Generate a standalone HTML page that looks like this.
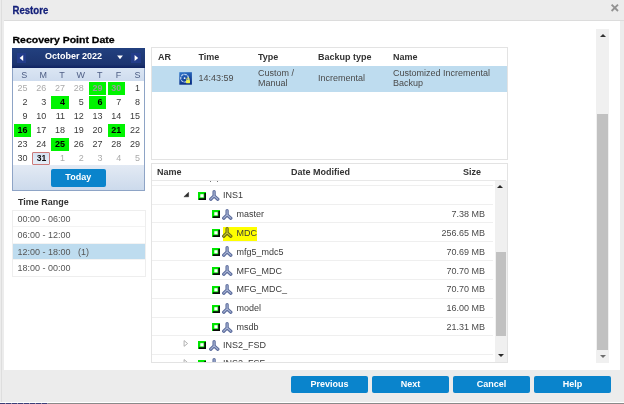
<!DOCTYPE html>
<html><head><meta charset="utf-8">
<style>
*{box-sizing:border-box;margin:0;padding:0}
html,body{width:624px;height:404px;overflow:hidden;background:#ececec;font-family:"Liberation Sans",sans-serif;position:relative}
.a{position:absolute}
.t{position:absolute;white-space:nowrap;line-height:1}
.s{display:inline-block;transform:scaleY(1.1);transform-origin:0 calc(50% + 0.3465em)}
#white{left:4px;top:21px;width:616px;height:349px;background:#fff}
#titleline{left:4px;top:20px;width:620px;height:1px;background:#dcdcdc}
#leftline{left:1px;top:0;width:1px;height:402px;background:#dedede}
#title{left:12.5px;top:6px;font-weight:bold;font-size:9.6px;color:#14207a;-webkit-text-stroke:0.25px #14207a}
.close{left:610px;top:2px;font-size:12px;color:#8a8a8a;font-weight:bold}
/* main scrollbar */
#msb{left:596px;top:29px;width:13px;height:333.6px;background:#f0f0f0}
#mthumb{left:597.3px;top:114px;width:10.7px;height:236.3px;background:#c1c1c1}
.arrowup{width:0;height:0;border-left:4px solid transparent;border-right:4px solid transparent;border-bottom:4px solid #333}
.arrowdn{width:0;height:0;border-left:4px solid transparent;border-right:4px solid transparent;border-top:4px solid #555}
#rpd .s{transform:scaleY(0.9)}
#rpd{left:12.5px;top:34.4px;font-weight:bold;font-size:10.5px;color:#000;-webkit-text-stroke:0.3px #000}
/* calendar */
#cal{left:12px;top:48px;width:133px;height:143px;border:1px solid #8ea4c6;background:#fff}
#calhead{left:12px;top:48px;width:133px;height:20.3px;background:linear-gradient(#22407f,#1c346f 82%,#0e2160)}
.navbtn{width:9.5px;height:9.8px;background:#233c8a}
#month{left:45px;top:52.1px;font-weight:bold;font-size:9px;color:#fff}
#dnames{left:13px;top:68px;width:131px;height:12.5px;background:linear-gradient(#dbe6f4,#cfdcee)}
.dn{font-size:9px;color:#4d5d84;top:70.8px}
.d{font-size:9px;color:#3a3a3a;text-align:right;width:17px}
.g{background:#00f400;color:#000;font-weight:bold}
.o{color:#aaa}
.g.o{color:#9a9a9a}
.td31{background:linear-gradient(#d6e2f2,#e6eef8);border:1px solid #cc7a7a;border-radius:1px;color:#111;font-weight:bold;font-size:8.6px!important;line-height:10.4px!important;padding-right:2.5px!important}
#calfoot{left:13px;top:165px;width:131px;height:24.5px;background:linear-gradient(#e3eaf4,#ccdaec)}
#today{left:50.5px;top:169px;width:55.5px;height:17.5px;background:#0a84cc;border-radius:2px;color:#fff;font-weight:bold;font-size:9px;text-align:center;line-height:17.5px}
#tr{left:18px;top:198px;font-weight:bold;font-size:9px;color:#333}
#list{left:12px;top:210px;width:134px;height:67px;border:1px solid #eeeeee}
.li{left:13px;width:132px;height:16.5px;font-size:9px;color:#555;padding-left:4.5px;line-height:16.5px;border-bottom:1px solid #f3f3f3}
/* top table */
#tbl{left:151px;top:47px;width:357px;height:113px;border:1px solid #e3e3e3}
.th{font-weight:bold;font-size:9px;color:#333;top:52.5px}
#selrow{left:152px;top:65.5px;width:355px;height:26px;background:#bedcef}
.td{font-size:9px;color:#4a4a4a}
/* tree */
#tree{left:151px;top:163px;width:356.5px;height:199.5px;border:1px solid #e3e3e3}
#treehdrline{left:152px;top:179.5px;width:354px;height:1px;background:#e8e8e8}
.sep{left:152px;width:341px;height:1px;background:#efefef}
#tsb{left:495px;top:181px;width:12px;height:180.5px;background:#f0f0f0}
#tthumb{left:495.5px;top:252px;width:10.5px;height:84px;background:#c1c1c1}
.tn{font-size:9px;color:#3a3a3a}
.sz{font-size:9px;color:#4a4a4a;text-align:right;width:80px;left:405px}
.cb{width:8px;height:8px;background:#00e000}
.cb::before{content:"";position:absolute;left:2px;top:2px;width:6px;height:6px;background:#000}
.cb::after{content:"";position:absolute;left:2px;top:2px;width:3.3px;height:3.3px;background:#fff}
/* buttons */
.btn{top:376px;width:77px;height:17.3px;background:#0a84cc;border-radius:2px;color:#fff;font-weight:bold;font-size:9px;text-align:center;line-height:16.2px}
#botline{left:0;top:402px;width:624px;height:1px;background:#fff}
#botline2{left:0;top:403px;width:624px;height:1px;background:#8a8a8a}
#botnavy{left:0;top:403px;width:48px;height:1px;background:repeating-linear-gradient(90deg,#3a3f78 0 5px,#9a9ab0 5px 6px)}
</style></head><body>
<div id="root" style="position:absolute;left:0;top:0;width:624px;height:404px;will-change:transform">
<div class="a" id="leftline"></div>
<div class="a" id="titleline"></div>
<div class="a" id="white"></div>
<div class="t" id="title"><span class="s">Restore</span></div>
<svg class="a" style="left:610px;top:3px" width="10" height="10" viewBox="0 0 10 10"><path d="M1.6 1.6L8 8M8 1.6L1.6 8" stroke="#929292" stroke-width="1.85"/></svg>

<div class="a" id="msb"></div>
<div class="a" id="mthumb"></div>
<div class="a arrowup" style="left:599.5px;top:33.5px;border-width:0 3px 3px"></div>
<div class="a arrowdn" style="left:599.5px;top:354.5px;border-width:3px 3px 0;border-top-color:#6e6e6e"></div>

<div class="t" id="rpd"><span class="s">Recovery Point Date</span></div>

<!-- calendar -->
<div class="a" id="cal"></div>
<div class="a" id="calhead"></div>
<div class="a navbtn" style="left:16.8px;top:53.3px"></div>
<div class="t" id="month"><span class="s">October 2022</span></div>

<div class="a navbtn" style="left:131px;top:53.3px"></div>
<svg class="a" style="left:0;top:0" width="160" height="80" viewBox="0 0 160 80"><path d="M19.6 58L23.2 55V61Z M117.1 55.6H122.9L120 59.2Z M138.2 58L134.6 55V61Z" fill="#fff"/></svg>

<div class="a" id="dnames"></div>
<div class="t dn" style="left:15.60px;width:17.40px;text-align:center"><span class="s">S</span></div>
<div class="t dn" style="left:34.45px;width:17.40px;text-align:center"><span class="s">M</span></div>
<div class="t dn" style="left:53.30px;width:17.40px;text-align:center"><span class="s">T</span></div>
<div class="t dn" style="left:72.15px;width:17.40px;text-align:center"><span class="s">W</span></div>
<div class="t dn" style="left:91.00px;width:17.40px;text-align:center"><span class="s">T</span></div>
<div class="t dn" style="left:109.85px;width:17.40px;text-align:center"><span class="s">F</span></div>
<div class="t dn" style="left:128.70px;width:17.40px;text-align:center"><span class="s">S</span></div>
<div class="t d o" style="left:13.60px;top:82.20px;width:17.40px;height:12.40px;line-height:12.40px;padding-right:3.50px"><span class="s">25</span></div>
<div class="t d o" style="left:32.45px;top:82.20px;width:17.40px;height:12.40px;line-height:12.40px;padding-right:3.60px"><span class="s">26</span></div>
<div class="t d o" style="left:51.30px;top:82.20px;width:17.40px;height:12.40px;line-height:12.40px;padding-right:3.70px"><span class="s">27</span></div>
<div class="t d o" style="left:70.15px;top:82.20px;width:17.40px;height:12.40px;line-height:12.40px;padding-right:3.80px"><span class="s">28</span></div>
<div class="t d g o" style="left:89.00px;top:82.20px;width:17.40px;height:12.40px;line-height:12.40px;padding-right:3.90px"><span class="s">29</span></div>
<div class="t d g o" style="left:107.85px;top:82.20px;width:17.40px;height:12.40px;line-height:12.40px;padding-right:4.00px"><span class="s">30</span></div>
<div class="t d" style="left:126.70px;top:82.20px;width:17.40px;height:12.40px;line-height:12.40px;padding-right:4.10px"><span class="s">1</span></div>
<div class="t d" style="left:13.60px;top:96.20px;width:17.40px;height:12.40px;line-height:12.40px;padding-right:3.50px"><span class="s">2</span></div>
<div class="t d" style="left:32.45px;top:96.20px;width:17.40px;height:12.40px;line-height:12.40px;padding-right:3.60px"><span class="s">3</span></div>
<div class="t d g" style="left:51.30px;top:96.20px;width:17.40px;height:12.40px;line-height:12.40px;padding-right:3.70px"><span class="s">4</span></div>
<div class="t d" style="left:70.15px;top:96.20px;width:17.40px;height:12.40px;line-height:12.40px;padding-right:3.80px"><span class="s">5</span></div>
<div class="t d g" style="left:89.00px;top:96.20px;width:17.40px;height:12.40px;line-height:12.40px;padding-right:3.90px"><span class="s">6</span></div>
<div class="t d" style="left:107.85px;top:96.20px;width:17.40px;height:12.40px;line-height:12.40px;padding-right:4.00px"><span class="s">7</span></div>
<div class="t d" style="left:126.70px;top:96.20px;width:17.40px;height:12.40px;line-height:12.40px;padding-right:4.10px"><span class="s">8</span></div>
<div class="t d" style="left:13.60px;top:110.20px;width:17.40px;height:12.40px;line-height:12.40px;padding-right:3.50px"><span class="s">9</span></div>
<div class="t d" style="left:32.45px;top:110.20px;width:17.40px;height:12.40px;line-height:12.40px;padding-right:3.60px"><span class="s">10</span></div>
<div class="t d" style="left:51.30px;top:110.20px;width:17.40px;height:12.40px;line-height:12.40px;padding-right:3.70px"><span class="s">11</span></div>
<div class="t d" style="left:70.15px;top:110.20px;width:17.40px;height:12.40px;line-height:12.40px;padding-right:3.80px"><span class="s">12</span></div>
<div class="t d" style="left:89.00px;top:110.20px;width:17.40px;height:12.40px;line-height:12.40px;padding-right:3.90px"><span class="s">13</span></div>
<div class="t d" style="left:107.85px;top:110.20px;width:17.40px;height:12.40px;line-height:12.40px;padding-right:4.00px"><span class="s">14</span></div>
<div class="t d" style="left:126.70px;top:110.20px;width:17.40px;height:12.40px;line-height:12.40px;padding-right:4.10px"><span class="s">15</span></div>
<div class="t d g" style="left:13.60px;top:124.20px;width:17.40px;height:12.40px;line-height:12.40px;padding-right:3.50px"><span class="s">16</span></div>
<div class="t d" style="left:32.45px;top:124.20px;width:17.40px;height:12.40px;line-height:12.40px;padding-right:3.60px"><span class="s">17</span></div>
<div class="t d" style="left:51.30px;top:124.20px;width:17.40px;height:12.40px;line-height:12.40px;padding-right:3.70px"><span class="s">18</span></div>
<div class="t d" style="left:70.15px;top:124.20px;width:17.40px;height:12.40px;line-height:12.40px;padding-right:3.80px"><span class="s">19</span></div>
<div class="t d" style="left:89.00px;top:124.20px;width:17.40px;height:12.40px;line-height:12.40px;padding-right:3.90px"><span class="s">20</span></div>
<div class="t d g" style="left:107.85px;top:124.20px;width:17.40px;height:12.40px;line-height:12.40px;padding-right:4.00px"><span class="s">21</span></div>
<div class="t d" style="left:126.70px;top:124.20px;width:17.40px;height:12.40px;line-height:12.40px;padding-right:4.10px"><span class="s">22</span></div>
<div class="t d" style="left:13.60px;top:138.20px;width:17.40px;height:12.40px;line-height:12.40px;padding-right:3.50px"><span class="s">23</span></div>
<div class="t d" style="left:32.45px;top:138.20px;width:17.40px;height:12.40px;line-height:12.40px;padding-right:3.60px"><span class="s">24</span></div>
<div class="t d g" style="left:51.30px;top:138.20px;width:17.40px;height:12.40px;line-height:12.40px;padding-right:3.70px"><span class="s">25</span></div>
<div class="t d" style="left:70.15px;top:138.20px;width:17.40px;height:12.40px;line-height:12.40px;padding-right:3.80px"><span class="s">26</span></div>
<div class="t d" style="left:89.00px;top:138.20px;width:17.40px;height:12.40px;line-height:12.40px;padding-right:3.90px"><span class="s">27</span></div>
<div class="t d" style="left:107.85px;top:138.20px;width:17.40px;height:12.40px;line-height:12.40px;padding-right:4.00px"><span class="s">28</span></div>
<div class="t d" style="left:126.70px;top:138.20px;width:17.40px;height:12.40px;line-height:12.40px;padding-right:4.10px"><span class="s">29</span></div>
<div class="t d" style="left:13.60px;top:152.20px;width:17.40px;height:12.40px;line-height:12.40px;padding-right:3.50px"><span class="s">30</span></div>
<div class="t d o td31" style="left:32.45px;top:152.20px;width:17.40px;height:12.40px;line-height:12.40px;padding-right:3.60px"><span class="s">31</span></div>
<div class="t d o" style="left:51.30px;top:152.20px;width:17.40px;height:12.40px;line-height:12.40px;padding-right:3.70px"><span class="s">1</span></div>
<div class="t d o" style="left:70.15px;top:152.20px;width:17.40px;height:12.40px;line-height:12.40px;padding-right:3.80px"><span class="s">2</span></div>
<div class="t d o" style="left:89.00px;top:152.20px;width:17.40px;height:12.40px;line-height:12.40px;padding-right:3.90px"><span class="s">3</span></div>
<div class="t d o" style="left:107.85px;top:152.20px;width:17.40px;height:12.40px;line-height:12.40px;padding-right:4.00px"><span class="s">4</span></div>
<div class="t d o" style="left:126.70px;top:152.20px;width:17.40px;height:12.40px;line-height:12.40px;padding-right:4.10px"><span class="s">5</span></div>
<div class="a" id="calfoot"></div>
<div class="t" id="today"><span class="s">Today</span></div>

<div class="t" id="tr"><span class="s">Time Range</span></div>
<div class="a" id="list"></div>
<div class="t li" style="top:210.5px"><span class="s">00:00 - 06:00</span></div>
<div class="t li" style="top:227px"><span class="s">06:00 - 12:00</span></div>
<div class="t li" style="top:243.5px;background:#bedcef"><span class="s">12:00 - 18:00 &nbsp;&nbsp;(1)</span></div>
<div class="t li" style="top:260px;border-bottom:none"><span class="s">18:00 - 00:00</span></div>

<!-- top table -->
<div class="a" id="tbl"></div>
<div class="a" id="selrow"></div>
<div class="t th" style="left:158px"><span class="s">AR</span></div>
<div class="t th" style="left:198.5px"><span class="s">Time</span></div>
<div class="t th" style="left:258px"><span class="s">Type</span></div>
<div class="t th" style="left:318px"><span class="s">Backup type</span></div>
<div class="t th" style="left:393px"><span class="s">Name</span></div>
<svg class="a" style="left:179px;top:72px" width="13" height="13" viewBox="0 0 13 13">
<defs><linearGradient id="ig" x1="0" y1="0" x2="0.3" y2="1"><stop offset="0" stop-color="#2f78cc"/><stop offset="1" stop-color="#0a2f86"/></linearGradient></defs>
<rect x="0.3" y="0.2" width="12.6" height="12.5" fill="url(#ig)"/>
<circle cx="5.6" cy="6.2" r="3.9" fill="none" stroke="#b8d0f0" stroke-width="1.2" stroke-dasharray="2.8 0.7"/>
<circle cx="5.6" cy="6.2" r="0.9" fill="#e8f0ff"/>
<rect x="7" y="8" width="4" height="3.2" rx="0.4" fill="#ecf050"/>
<path d="M7.8 8.2V7.1a1.2 1.2 0 0 1 2.4 0V8.2" fill="none" stroke="#ecf050" stroke-width="0.9"/>
</svg>
<div class="t td" style="left:198.5px;top:73.5px"><span class="s">14:43:59</span></div>
<div class="t td" style="left:258px;top:68.5px"><span class="s">Custom /</span></div>
<div class="t td" style="left:258px;top:79px"><span class="s">Manual</span></div>
<div class="t td" style="left:318px;top:74px"><span class="s">Incremental</span></div>
<div class="t td" style="left:393px;top:68.5px"><span class="s">Customized Incremental</span></div>
<div class="t td" style="left:393px;top:79px"><span class="s">Backup</span></div>

<!-- tree -->
<div class="a" id="tree"></div>
<div class="t th" style="left:157px;top:167.5px"><span class="s">Name</span></div>
<div class="t th" style="left:291px;top:167.5px"><span class="s">Date Modified</span></div>
<div class="t th" style="left:463px;top:167.5px"><span class="s">Size</span></div>
<div class="a" id="treehdrline"></div>
<div class="a" style="left:0;top:180.5px;width:495px;height:181.5px;overflow:hidden"><div class="a" style="left:0;top:-180.5px;width:624px;height:404px"><div class="a" style="left:210px;top:180.5px;width:1.2px;height:1.2px;background:#777"></div><div class="a" style="left:216.8px;top:180.5px;width:1.2px;height:1.2px;background:#777"></div>
<div class="a sep" style="top:185.00px"></div>
<div class="a sep" style="top:204.00px"></div>
<div class="a sep" style="top:222.00px"></div>
<div class="a sep" style="top:241.00px"></div>
<div class="a sep" style="top:260.00px"></div>
<div class="a sep" style="top:279.00px"></div>
<div class="a sep" style="top:298.00px"></div>
<div class="a sep" style="top:317.00px"></div>
<div class="a sep" style="top:335.00px"></div>
<div class="a sep" style="top:354.00px"></div>
<svg class="a" style="left:183px;top:191.50px" width="8" height="8"><path d="M0.9 4.8H5.6V0.3Z" fill="#2a2a2a" stroke="#2a2a2a" stroke-width="0.5" stroke-linejoin="round"/></svg>
<svg class="a" style="left:198.20px;top:191.50px" width="8" height="8" viewBox="0 0 8 8"><rect width="8" height="8" fill="#00e600"/><path d="M8 0.9V8H0.9V6.3H6.3V0.9Z" fill="#0a0a0a"/><rect x="2.3" y="2.2" width="3.3" height="3.2" fill="#fff"/></svg>
<svg class="a" style="left:208.50px;top:188.70px" width="12" height="13" viewBox="0 0 12 13"><path d="M5.1 2.6V6.9L1.7 10.2M5.1 6.9L8.8 10.2" fill="none" stroke="#5d6d9d" stroke-width="3.3" stroke-linecap="round" stroke-linejoin="round"/><path d="M5.1 2.6V6.9L1.7 10.2M5.1 6.9L8.8 10.2" fill="none" stroke="#aab6d6" stroke-width="1.1" stroke-linecap="round" stroke-linejoin="round"/></svg>
<div class="t tn" style="left:222.90px;top:191.20px"><span class="s">INS1</span></div>
<svg class="a" style="left:211.90px;top:210.35px" width="8" height="8" viewBox="0 0 8 8"><rect width="8" height="8" fill="#00e600"/><path d="M8 0.9V8H0.9V6.3H6.3V0.9Z" fill="#0a0a0a"/><rect x="2.3" y="2.2" width="3.3" height="3.2" fill="#fff"/></svg>
<svg class="a" style="left:222.20px;top:207.55px" width="12" height="13" viewBox="0 0 12 13"><path d="M5.1 2.6V6.9L1.7 10.2M5.1 6.9L8.8 10.2" fill="none" stroke="#5d6d9d" stroke-width="3.3" stroke-linecap="round" stroke-linejoin="round"/><path d="M5.1 2.6V6.9L1.7 10.2M5.1 6.9L8.8 10.2" fill="none" stroke="#aab6d6" stroke-width="1.1" stroke-linecap="round" stroke-linejoin="round"/></svg>
<div class="t tn" style="left:236.60px;top:210.05px"><span class="s">master</span></div>
<div class="t sz" style="top:210.05px"><span class="s">7.38 MB</span></div>
<div class="a" style="left:222.70px;top:227.20px;width:34.2px;height:13.4px;background:#ffff00"></div>
<svg class="a" style="left:211.90px;top:229.20px" width="8" height="8" viewBox="0 0 8 8"><rect width="8" height="8" fill="#00e600"/><path d="M8 0.9V8H0.9V6.3H6.3V0.9Z" fill="#0a0a0a"/><rect x="2.3" y="2.2" width="3.3" height="3.2" fill="#fff"/></svg>
<svg class="a" style="left:222.20px;top:226.40px" width="12" height="13" viewBox="0 0 12 13"><path d="M5.1 2.6V6.9L1.7 10.2M5.1 6.9L8.8 10.2" fill="none" stroke="#6e6e12" stroke-width="3.3" stroke-linecap="round" stroke-linejoin="round"/><path d="M5.1 2.6V6.9L1.7 10.2M5.1 6.9L8.8 10.2" fill="none" stroke="#c4c438" stroke-width="1.1" stroke-linecap="round" stroke-linejoin="round"/></svg>
<div class="t tn" style="left:236.60px;top:228.90px"><span class="s">MDC</span></div>
<div class="t sz" style="top:228.90px"><span class="s">256.65 MB</span></div>
<svg class="a" style="left:211.90px;top:248.05px" width="8" height="8" viewBox="0 0 8 8"><rect width="8" height="8" fill="#00e600"/><path d="M8 0.9V8H0.9V6.3H6.3V0.9Z" fill="#0a0a0a"/><rect x="2.3" y="2.2" width="3.3" height="3.2" fill="#fff"/></svg>
<svg class="a" style="left:222.20px;top:245.25px" width="12" height="13" viewBox="0 0 12 13"><path d="M5.1 2.6V6.9L1.7 10.2M5.1 6.9L8.8 10.2" fill="none" stroke="#5d6d9d" stroke-width="3.3" stroke-linecap="round" stroke-linejoin="round"/><path d="M5.1 2.6V6.9L1.7 10.2M5.1 6.9L8.8 10.2" fill="none" stroke="#aab6d6" stroke-width="1.1" stroke-linecap="round" stroke-linejoin="round"/></svg>
<div class="t tn" style="left:236.60px;top:247.75px"><span class="s">mfg5_mdc5</span></div>
<div class="t sz" style="top:247.75px"><span class="s">70.69 MB</span></div>
<svg class="a" style="left:211.90px;top:266.90px" width="8" height="8" viewBox="0 0 8 8"><rect width="8" height="8" fill="#00e600"/><path d="M8 0.9V8H0.9V6.3H6.3V0.9Z" fill="#0a0a0a"/><rect x="2.3" y="2.2" width="3.3" height="3.2" fill="#fff"/></svg>
<svg class="a" style="left:222.20px;top:264.10px" width="12" height="13" viewBox="0 0 12 13"><path d="M5.1 2.6V6.9L1.7 10.2M5.1 6.9L8.8 10.2" fill="none" stroke="#5d6d9d" stroke-width="3.3" stroke-linecap="round" stroke-linejoin="round"/><path d="M5.1 2.6V6.9L1.7 10.2M5.1 6.9L8.8 10.2" fill="none" stroke="#aab6d6" stroke-width="1.1" stroke-linecap="round" stroke-linejoin="round"/></svg>
<div class="t tn" style="left:236.60px;top:266.60px"><span class="s">MFG_MDC</span></div>
<div class="t sz" style="top:266.60px"><span class="s">70.70 MB</span></div>
<svg class="a" style="left:211.90px;top:285.75px" width="8" height="8" viewBox="0 0 8 8"><rect width="8" height="8" fill="#00e600"/><path d="M8 0.9V8H0.9V6.3H6.3V0.9Z" fill="#0a0a0a"/><rect x="2.3" y="2.2" width="3.3" height="3.2" fill="#fff"/></svg>
<svg class="a" style="left:222.20px;top:282.95px" width="12" height="13" viewBox="0 0 12 13"><path d="M5.1 2.6V6.9L1.7 10.2M5.1 6.9L8.8 10.2" fill="none" stroke="#5d6d9d" stroke-width="3.3" stroke-linecap="round" stroke-linejoin="round"/><path d="M5.1 2.6V6.9L1.7 10.2M5.1 6.9L8.8 10.2" fill="none" stroke="#aab6d6" stroke-width="1.1" stroke-linecap="round" stroke-linejoin="round"/></svg>
<div class="t tn" style="left:236.60px;top:285.45px"><span class="s">MFG_MDC_</span></div>
<div class="t sz" style="top:285.45px"><span class="s">70.70 MB</span></div>
<svg class="a" style="left:211.90px;top:304.60px" width="8" height="8" viewBox="0 0 8 8"><rect width="8" height="8" fill="#00e600"/><path d="M8 0.9V8H0.9V6.3H6.3V0.9Z" fill="#0a0a0a"/><rect x="2.3" y="2.2" width="3.3" height="3.2" fill="#fff"/></svg>
<svg class="a" style="left:222.20px;top:301.80px" width="12" height="13" viewBox="0 0 12 13"><path d="M5.1 2.6V6.9L1.7 10.2M5.1 6.9L8.8 10.2" fill="none" stroke="#5d6d9d" stroke-width="3.3" stroke-linecap="round" stroke-linejoin="round"/><path d="M5.1 2.6V6.9L1.7 10.2M5.1 6.9L8.8 10.2" fill="none" stroke="#aab6d6" stroke-width="1.1" stroke-linecap="round" stroke-linejoin="round"/></svg>
<div class="t tn" style="left:236.60px;top:304.30px"><span class="s">model</span></div>
<div class="t sz" style="top:304.30px"><span class="s">16.00 MB</span></div>
<svg class="a" style="left:211.90px;top:323.45px" width="8" height="8" viewBox="0 0 8 8"><rect width="8" height="8" fill="#00e600"/><path d="M8 0.9V8H0.9V6.3H6.3V0.9Z" fill="#0a0a0a"/><rect x="2.3" y="2.2" width="3.3" height="3.2" fill="#fff"/></svg>
<svg class="a" style="left:222.20px;top:320.65px" width="12" height="13" viewBox="0 0 12 13"><path d="M5.1 2.6V6.9L1.7 10.2M5.1 6.9L8.8 10.2" fill="none" stroke="#5d6d9d" stroke-width="3.3" stroke-linecap="round" stroke-linejoin="round"/><path d="M5.1 2.6V6.9L1.7 10.2M5.1 6.9L8.8 10.2" fill="none" stroke="#aab6d6" stroke-width="1.1" stroke-linecap="round" stroke-linejoin="round"/></svg>
<div class="t tn" style="left:236.60px;top:323.15px"><span class="s">msdb</span></div>
<div class="t sz" style="top:323.15px"><span class="s">21.31 MB</span></div>
<svg class="a" style="left:183px;top:340.30px" width="8" height="10"><path d="M1.1 0.6L4.6 3.5L1.1 6.3Z" fill="#fff" stroke="#a8a8a8" stroke-width="0.9"/></svg>
<svg class="a" style="left:198.20px;top:341.30px" width="8" height="8" viewBox="0 0 8 8"><rect width="8" height="8" fill="#00e600"/><path d="M8 0.9V8H0.9V6.3H6.3V0.9Z" fill="#0a0a0a"/><rect x="2.3" y="2.2" width="3.3" height="3.2" fill="#fff"/></svg>
<svg class="a" style="left:208.50px;top:338.50px" width="12" height="13" viewBox="0 0 12 13"><path d="M5.1 2.6V6.9L1.7 10.2M5.1 6.9L8.8 10.2" fill="none" stroke="#5d6d9d" stroke-width="3.3" stroke-linecap="round" stroke-linejoin="round"/><path d="M5.1 2.6V6.9L1.7 10.2M5.1 6.9L8.8 10.2" fill="none" stroke="#aab6d6" stroke-width="1.1" stroke-linecap="round" stroke-linejoin="round"/></svg>
<div class="t tn" style="left:222.90px;top:341.00px"><span class="s">INS2_FSD</span></div>
<svg class="a" style="left:183px;top:358.60px" width="8" height="10"><path d="M1.1 0.6L4.6 3.5L1.1 6.3Z" fill="#fff" stroke="#a8a8a8" stroke-width="0.9"/></svg>
<svg class="a" style="left:198.20px;top:359.60px" width="8" height="8" viewBox="0 0 8 8"><rect width="8" height="8" fill="#00e600"/><path d="M8 0.9V8H0.9V6.3H6.3V0.9Z" fill="#0a0a0a"/><rect x="2.3" y="2.2" width="3.3" height="3.2" fill="#fff"/></svg>
<svg class="a" style="left:208.50px;top:356.80px" width="12" height="13" viewBox="0 0 12 13"><path d="M5.1 2.6V6.9L1.7 10.2M5.1 6.9L8.8 10.2" fill="none" stroke="#5d6d9d" stroke-width="3.3" stroke-linecap="round" stroke-linejoin="round"/><path d="M5.1 2.6V6.9L1.7 10.2M5.1 6.9L8.8 10.2" fill="none" stroke="#aab6d6" stroke-width="1.1" stroke-linecap="round" stroke-linejoin="round"/></svg>
<div class="t tn" style="left:222.90px;top:359.30px"><span class="s">INS2_FSF</span></div></div></div>
<div class="a" id="tsb"></div>
<div class="a" id="tthumb"></div>
<div class="a arrowup" style="left:497.3px;top:185.3px;border-width:0 3.4px 3.4px;border-bottom-color:#2a2a2a"></div>
<div class="a arrowdn" style="left:497.8px;top:353.8px;border-width:3.4px 3.4px 0;border-top-color:#2a2a2a"></div>

<!-- buttons -->
<div class="t btn" style="left:291px"><span class="s">Previous</span></div>
<div class="t btn" style="left:372px"><span class="s">Next</span></div>
<div class="t btn" style="left:453px"><span class="s">Cancel</span></div>
<div class="t btn" style="left:534px"><span class="s">Help</span></div>
<div class="a" id="botline"></div>
<div class="a" id="botline2"></div>
<div class="a" id="botnavy"></div>
</div>
</body></html>
